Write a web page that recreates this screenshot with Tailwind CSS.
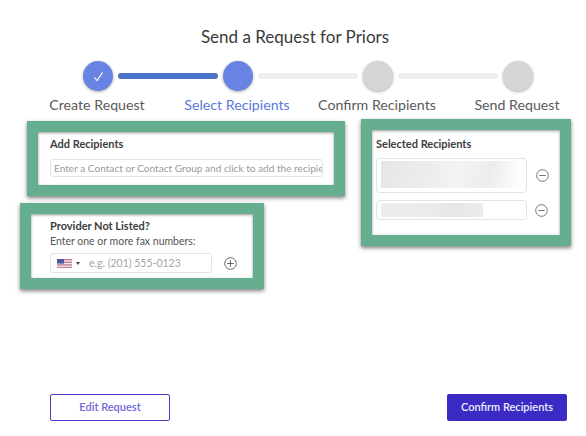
<!DOCTYPE html>
<html lang="en">
<head>
    <meta charset="UTF-8">
    <title>Send a Request for Priors</title>
    <script src="https://cdn.jsdelivr.net/npm/@tailwindcss/browser@4"></script>
</head>
<body class="bg-white font-['Lato',sans-serif] text-[#3d3d3d] overflow-hidden">
    <main class="relative h-[436px] w-[586px]">
        <h1 class="pt-[26px] text-center text-[17px] leading-[22px] text-[#3a3a3a] pl-[4px]">Send a Request for Priors</h1>

        <!-- stepper -->
        <div class="mt-[13px] ml-[83px] flex items-center gap-[5px]">
            <div class="w-[30px] h-[30px] rounded-full bg-[#6783e4] shadow-[0_1px_3px_rgba(0,0,0,0.35)] flex items-center justify-center">
                <svg class="w-[11px] h-[11px]" viewBox="0 0 12 12" fill="none" stroke="#fff" stroke-width="1.2"><path d="M1.5 6.8 4.5 10.5 10.5 1.5"/></svg>
            </div>
            <div class="w-[100px] h-[6px] rounded-full bg-[#4a72c9]"></div>
            <div class="w-[30px] h-[30px] rounded-full bg-[#6783e4] shadow-[0_1px_3px_rgba(0,0,0,0.35)]"></div>
            <div class="w-[100px] h-[6px] rounded-full bg-[#efefef]"></div>
            <div class="w-[30px] h-[30px] rounded-full bg-[#d6d6d6] shadow-[0_1px_3px_rgba(0,0,0,0.35)]"></div>
            <div class="w-[100px] h-[6px] rounded-full bg-[#efefef]"></div>
            <div class="w-[30px] h-[30px] rounded-full bg-[#d6d6d6] shadow-[0_1px_3px_rgba(0,0,0,0.35)]"></div>
        </div>
        <div class="mt-[4px] ml-[27px] grid grid-cols-[repeat(4,140px)] text-center text-[14.2px] leading-[20px] text-[#5a5a5a]">
            <span>Create Request</span>
            <span class="text-[#5b78dc]">Select Recipients</span>
            <span>Confirm Recipients</span>
            <span>Send Request</span>
        </div>

        <div class="flex items-start">
            <div class="w-[345px]">
                <section class="mt-[6px] ml-[27px] w-[318px] h-[75px] border-[11px] border-[#65ae8f] bg-white shadow-[0_2px_4px_rgba(0,0,0,0.5),inset_0_1px_3px_rgba(0,0,0,0.4)] pl-[12px] pt-[4px]">
                    <h2 class="text-[11px] leading-[15px] font-bold text-[#3d3d3d]">Add Recipients</h2>
                    <div class="mt-[8px] w-[273px] h-[18px] border border-[#e3e3e3] rounded-[3px] overflow-hidden whitespace-nowrap pl-[3px] text-[10.1px] leading-[17px] text-[#9b9b9b]">Enter a Contact or Contact Group and click to add the recipient</div>
                </section>
                <section class="mt-[7px] ml-[20px] w-[244px] h-[86px] border-[11px] border-[#65ae8f] bg-white shadow-[0_2px_4px_rgba(0,0,0,0.5),inset_0_1px_3px_rgba(0,0,0,0.4)] pl-[19px] pt-[4px]">
                    <h2 class="text-[11px] leading-[15px] font-bold text-[#3d3d3d]">Provider Not Listed?</h2>
                    <p class="mt-[1px] text-[10.5px] leading-[14px] text-[#555]">Enter one or more fax numbers:</p>
                    <div class="mt-[5px] flex items-center">
                        <div class="w-[162px] h-[20px] border border-[#e3e3e3] rounded-[3px] flex items-center pl-[6px]">
                            <svg class="w-[15px] h-[9px]" viewBox="0 0 15 9">
                                <rect width="15" height="9" fill="#c9808c"/>
                                <rect y="1.4" width="15" height="1.2" fill="#eee"/>
                                <rect y="4" width="15" height="1.2" fill="#eee"/>
                                <rect y="6.6" width="15" height="1.2" fill="#eee"/>
                                <rect width="7" height="4.6" fill="#4a5a9a"/>
                            </svg>
                            <svg class="ml-[4px] w-[4px] h-[3px]" viewBox="0 0 4 3"><path d="M0 0h4L2 3z" fill="#444"/></svg>
                            <span class="ml-[9px] text-[10.5px] leading-[14px] text-[#a5a5a5]">e.g. (201) 555-0123</span>
                        </div>
                        <svg class="ml-[12px] w-[13px] h-[13px]" viewBox="0 0 13 13" fill="none" stroke="#444" stroke-width="0.8"><circle cx="6.5" cy="6.5" r="5.8"/><path d="M6.5 3.2v6.6M3.2 6.5h6.6"/></svg>
                    </div>
                </section>
            </div>
            <section class="mt-[4px] ml-[16px] w-[210px] h-[127px] border-[11px] border-[#65ae8f] bg-white shadow-[0_2px_4px_rgba(0,0,0,0.5),inset_0_1px_3px_rgba(0,0,0,0.4)] pl-[4px] pt-[6px]">
                <h2 class="text-[11px] leading-[15px] font-bold text-[#3d3d3d]">Selected Recipients</h2>
                <div class="mt-[7px] flex items-center">
                    <div class="w-[151px] h-[35px] border border-[#e3e3e3] rounded-[4px] overflow-hidden pt-[2px] pb-[4px] pl-[4px] pr-[6px]">
                        <div class="h-full bg-[linear-gradient(100deg,#e6e6e6_0%,#ededed_35%,#f3f3f3_55%,#ececec_78%,#ffffff_100%)]"></div>
                    </div>
                    <svg class="ml-[9px] w-[13px] h-[13px]" viewBox="0 0 13 13" fill="none" stroke="#555" stroke-width="0.8"><circle cx="6.5" cy="6.5" r="5.8"/><path d="M3.2 6.5h6.6"/></svg>
                </div>
                <div class="mt-[7px] flex items-center">
                    <div class="w-[151px] h-[20px] border border-[#e3e3e3] rounded-[4px] overflow-hidden py-[2px] pl-[4px] pr-[43px]">
                        <div class="h-full bg-[linear-gradient(90deg,#ececec_0%,#ebebeb_50%,#e6e6e6_70%,#ececec_100%)]"></div>
                    </div>
                    <svg class="ml-[8px] w-[13px] h-[13px]" viewBox="0 0 13 13" fill="none" stroke="#555" stroke-width="0.8"><circle cx="6.5" cy="6.5" r="5.8"/><path d="M3.2 6.5h6.6"/></svg>
                </div>
            </section>
        </div>

        <!-- footer buttons -->
        <div class="absolute left-[50px] right-[19px] top-[394px] flex justify-between">
            <button class="w-[120px] h-[27px] border border-[#4a3bd0] rounded-[2px] bg-white text-[11px] font-semibold text-[#7068d8]">Edit Request</button>
            <button class="w-[120px] h-[27px] rounded-[2px] bg-[#3b2bc4] text-[11px] font-semibold text-[#eeeeff]">Confirm Recipients</button>
        </div>
    </main>
</body>
</html>
